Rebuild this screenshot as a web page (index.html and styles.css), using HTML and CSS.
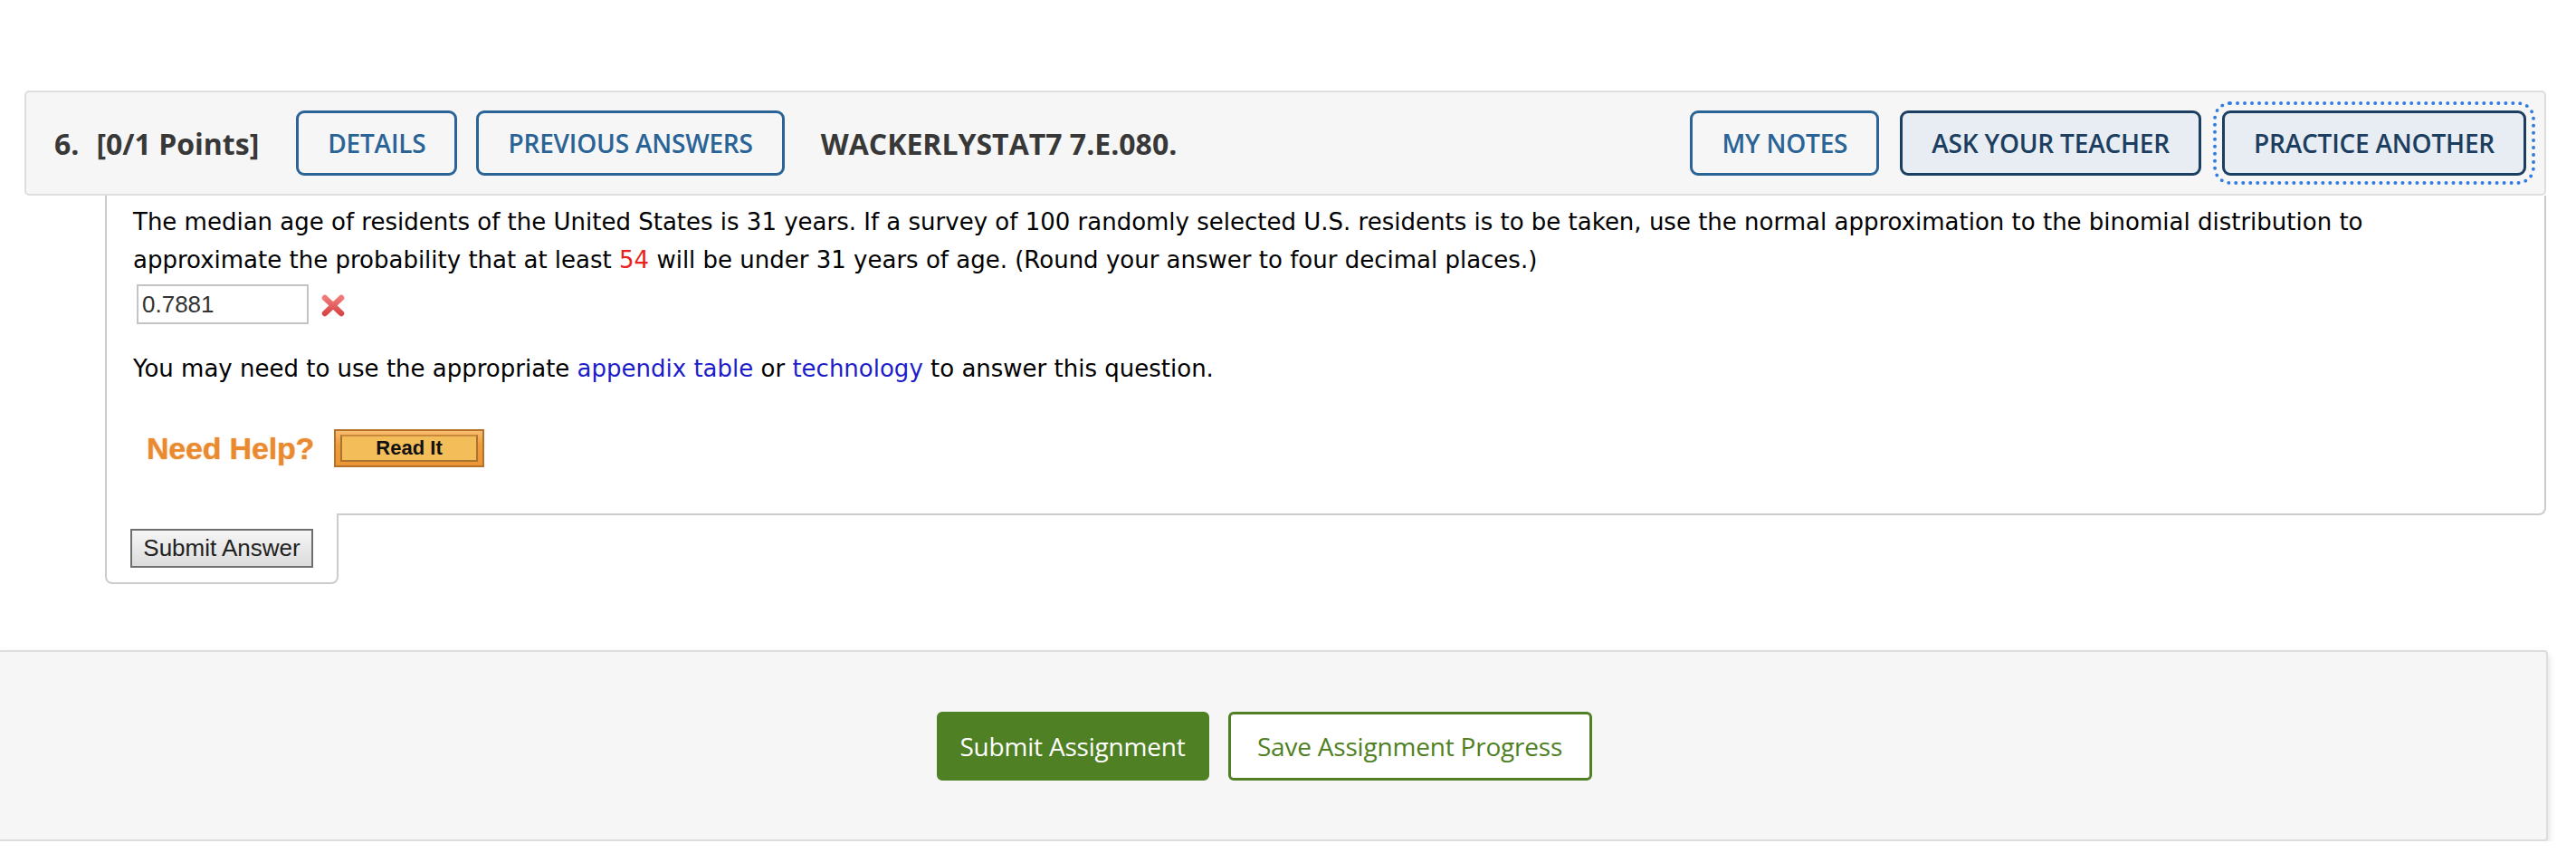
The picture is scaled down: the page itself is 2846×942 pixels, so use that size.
FILE: index.html
```html
<!DOCTYPE html>
<html lang="en">
<head>
<meta charset="utf-8">
<title>Question 6</title>
<link rel="stylesheet" href="styles.css">
</head>
<body>
<div class="page">
  <section class="question">
    <header class="qhead">
      <div class="qnum"><span>6.</span><span class="points">[0/1 Points]</span></div>
      <button class="hbtn">DETAILS</button>
      <button class="hbtn">PREVIOUS ANSWERS</button>
      <div class="qcode">WACKERLYSTAT7 7.E.080.</div>
      <div class="spacer"></div>
      <button class="hbtn">MY NOTES</button>
      <button class="hbtn dark">ASK YOUR TEACHER</button>
      <button class="hbtn dark focused">PRACTICE ANOTHER</button>
    </header>
    <div class="qbody">
      <p class="qtext">The median age of residents of the United States is 31 years. If a survey of 100 randomly selected U.S. residents is to be taken, use the normal approximation to the binomial distribution to approximate the probability that at least <span class="red">54</span> will be under 31 years of age. (Round your answer to four decimal places.)</p>
      <div class="answer">
        <div class="ansbox">0.7881</div>
        <svg class="wrong" width="28" height="25" viewBox="0 0 28 25">
          <defs>
            <linearGradient id="xg" x1="0" y1="0" x2="0" y2="1">
              <stop offset="0" stop-color="#f07a7a"/>
              <stop offset="1" stop-color="#d84848"/>
            </linearGradient>
          </defs>
          <path d="M5 4 L23 21 M23 4 L5 21" stroke="url(#xg)" stroke-width="6.5" stroke-linecap="round"/>
        </svg>
      </div>
      <p class="note">You may need to use the appropriate <a class="lnk">appendix table</a> or <a class="lnk">technology</a> to answer this question.</p>
      <div class="help">
        <span class="needhelp">Need Help?</span>
        <span class="readit"><span class="readit-in">Read It</span></span>
      </div>
    </div>
    <div class="tab">
      <button class="submit-ans">Submit Answer</button>
    </div>
  </section>
  <footer class="footer">
    <button class="fbtn primary">Submit Assignment</button>
    <button class="fbtn outline">Save Assignment Progress</button>
  </footer>
</div>
</body>
</html>
```
FILE: styles.css
```css
html, body {
  margin: 0;
  padding: 0;
  background: #fff;
}

.page {
  padding-top: 100px;
  width: 2846px;
}

.question {
  margin-left: 27px;
  width: 2786px;
}

.qhead {
  box-sizing: border-box;
  height: 116px;
  background: #f6f6f6;
  border: 2px solid #dedede;
  border-radius: 5px;
  display: flex;
  align-items: center;
  padding: 0 20px 0 31px;
  font-family: "Open Sans", "Liberation Sans", sans-serif;
}

.qnum {
  font-size: 32px;
  font-weight: 700;
  color: #383838;
  display: flex;
  white-space: nowrap;
}

.points {
  margin-left: 19px;
}

.hbtn {
  box-sizing: border-box;
  height: 72px;
  padding: 0 32px;
  border: 3px solid #2a6496;
  border-radius: 9px;
  background: #f6f6f6;
  color: #2a6496;
  font-family: "Open Sans", "Liberation Sans", sans-serif;
  font-size: 28px;
  font-weight: 600;
  letter-spacing: -0.2px;
  margin-left: 21px;
  white-space: nowrap;
  cursor: pointer;
}

.qnum + .hbtn {
  margin-left: 41px;
}

.hbtn.dark {
  border-color: #1c3e61;
  color: #1c3e61;
  background: #e7edf2;
  margin-left: 23px;
}

.hbtn.focused {
  outline: 4px dotted #2f7de1;
  outline-offset: 6px;
}

.qcode {
  margin-left: 40px;
  font-size: 32px;
  font-weight: 700;
  color: #383838;
  white-space: nowrap;
}

.spacer {
  flex: 1;
}

.qbody {
  margin-left: 89px;
  border-left: 2px solid #cccccc;
  border-right: 2px solid #cccccc;
  border-bottom: 2px solid #cccccc;
  border-bottom-right-radius: 8px;
  padding: 8px 60px 51px 29px;
  font-family: "DejaVu Sans", Verdana, sans-serif;
  font-size: 26px;
  line-height: 42px;
  color: #000;
}

.qtext {
  margin: 0;
}

.red {
  color: #e8221c;
}

.answer {
  margin-top: 6px;
  display: flex;
  align-items: center;
  padding-left: 4px;
}

.ansbox {
  box-sizing: border-box;
  width: 190px;
  height: 44px;
  border: 2px solid #c4c4c4;
  padding-left: 4px;
  font-family: "Liberation Sans", Arial, sans-serif;
  font-size: 26px;
  line-height: 40px;
  color: #333;
}

.wrong {
  margin-left: 13px;
  margin-top: 2px;
}

.note {
  margin: 28px 0 0 0;
}

.lnk {
  color: #1d1dc9;
  text-decoration: none;
}

.help {
  margin-top: 46px;
  margin-left: 15px;
  display: flex;
  align-items: center;
  height: 42px;
}

.needhelp {
  font-family: "Liberation Sans", Arial, sans-serif;
  font-weight: 700;
  font-size: 34px;
  color: #e98a31;
  text-shadow: 0 0 1.5px rgba(233, 138, 49, 0.7);
  letter-spacing: -0.2px;
}

.readit {
  box-sizing: border-box;
  margin-left: 22px;
  width: 166px;
  height: 42px;
  border: 2px solid #b4712a;
  background: linear-gradient(#f8bd70, #ee9c3c 40%, #ec9535);
  display: flex;
  align-items: center;
  justify-content: center;
}

.readit-in {
  box-sizing: border-box;
  width: 152px;
  height: 30px;
  border: 2px solid #a9742e;
  border-top-color: #c88a3a;
  background: #f3bd5a;
  font-family: "Liberation Sans", Arial, sans-serif;
  font-weight: 700;
  font-size: 22px;
  line-height: 26px;
  text-align: center;
  color: #111;
}

.tab {
  box-sizing: border-box;
  margin-left: 89px;
  margin-top: -2px;
  width: 258px;
  background: #fff;
  border-left: 2px solid #cccccc;
  border-right: 2px solid #cccccc;
  border-bottom: 2px solid #cccccc;
  border-bottom-left-radius: 8px;
  border-bottom-right-radius: 8px;
  padding: 17px 0 16px 26px;
  position: relative;
}

.submit-ans {
  box-sizing: border-box;
  width: 202px;
  height: 43px;
  border: 2px solid #6f6f6f;
  background: linear-gradient(#f5f5f5, #dcdcdc);
  font-family: "Liberation Sans", Arial, sans-serif;
  font-size: 26px;
  color: #222;
  padding: 0;
  display: block;
}

.footer {
  box-sizing: border-box;
  margin-top: 73px;
  width: 2815px;
  height: 211px;
  background: #f6f6f6;
  border: 2px solid #dddddd;
  border-left: none;
  border-radius: 0 4px 4px 0;
  box-shadow: 0 5px 8px rgba(0, 0, 0, 0.16);
  display: flex;
  align-items: center;
  justify-content: center;
  gap: 21px;
  padding-right: 20px;
}

.fbtn {
  box-sizing: border-box;
  height: 76px;
  border-radius: 6px;
  font-family: "Open Sans", "Liberation Sans", sans-serif;
  font-size: 28px;
  font-weight: 400;
  padding: 0 16px;
  letter-spacing: -0.2px;
}

.fbtn.primary {
  background: #4f8024;
  border: 3px solid #4f8024;
  color: #fff;
  width: 301px;
}

.fbtn.outline {
  background: #fff;
  border: 3px solid #4f8024;
  color: #4f8024;
  width: 402px;
}
```
